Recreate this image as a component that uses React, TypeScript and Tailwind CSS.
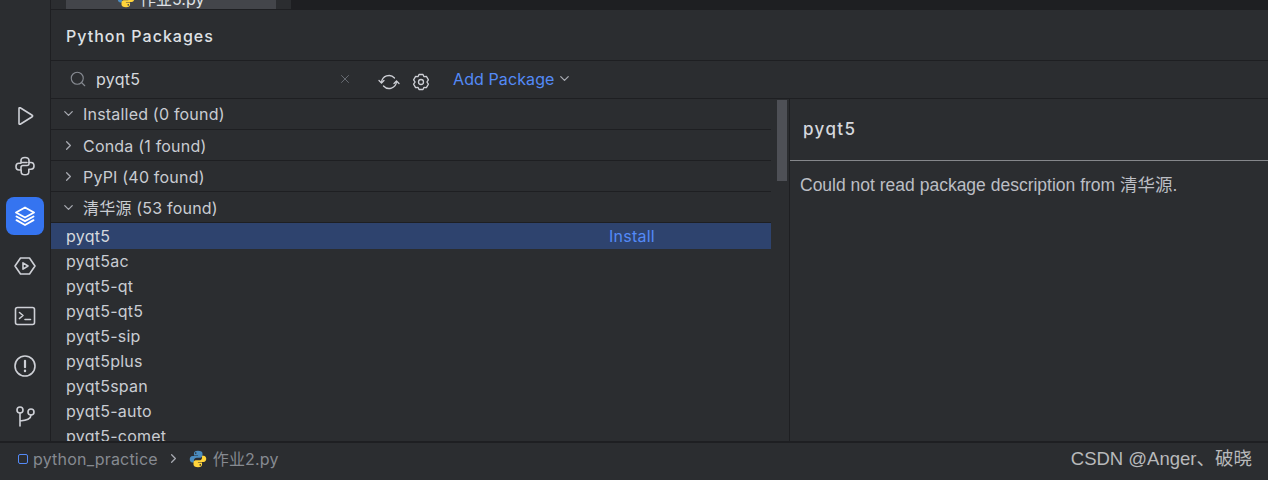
import { ChevronDown, ChevronRight, Search, X } from 'lucide-react';

const CJK = "font-['Inter','Noto_Sans_CJK_SC',sans-serif]";

const packages = ['pyqt5ac', 'pyqt5-qt', 'pyqt5-qt5', 'pyqt5-sip', 'pyqt5plus', 'pyqt5span', 'pyqt5-auto', 'pyqt5-comet'];

function PythonLogo({ size = 18 }: { size?: number }) {
  return (
    <svg width={size} height={size} viewBox="0 0 24 24" className="shrink-0">
      <path fill="#4b8bbe" d="M11.9 1C8 1 6.6 2.6 6.6 4.6V7.2h5.5V8H4.6C2.4 8 1 9.8 1 12.2s1.300 4.300 3.500 4.300h2.100v-2.700c0-2.100 1.800-3.600 3.800-3.600h4.600c1.700 0 3-1.400 3-3.100V4.600C18 2.500 16 1 11.900 1zM9 3a1.100 1.100 0 1 1 0 2.200A1.100 1.100 0 0 1 9 3z" />
      <path fill="#ffd43b" d="M12.100 23c3.900 0 5.300-1.600 5.300-3.600v-2.600h-5.500V16h7.500c2.200 0 3.600-1.800 3.600-4.200s-1.300-4.300-3.500-4.300h-2.100v2.700c0 2.100-1.800 3.600-3.800 3.600H9c-1.700 0-3 1.400-3 3.100v2.500C6 21.500 8 23 12.100 23zM15 21a1.100 1.100 0 1 1 0-2.200 1.100 1.100 0 0 1 0 2.200z" />
    </svg>
  );
}

function Rail({ children, active }: { children: React.ReactNode; active?: boolean }) {
  return (
    <div className={`w-[38px] h-[38px] rounded-[8px] flex items-center justify-center ${active ? 'bg-[#3574f0] text-white' : 'text-[#ced0d6]'}`}>
      {children}
    </div>
  );
}

const iconProps = { width: 24, height: 24, viewBox: '0 0 24 24', fill: 'none', stroke: 'currentColor', strokeWidth: 1.6, strokeLinejoin: 'round' as const, strokeLinecap: 'round' as const };

function GroupRow({ label, open, first }: { label: string; open?: boolean; first?: boolean }) {
  return (
    <div className={`h-[31px] shrink-0 flex items-center pl-[10px] border-b border-[#1e1f22] ${first ? 'pb-[1px]' : 'pt-[1px]'}`}>
      {open ? <ChevronDown size={15} className="text-[#a8abb2]" /> : <ChevronRight size={15} className="text-[#a8abb2]" />}
      <span className="ml-[7px] text-[16px] tracking-[0.2px] text-[#c9ccd2] whitespace-pre">{label}</span>
    </div>
  );
}

export default function App() {
  return (
    <div className={`w-[1268px] h-[480px] flex flex-col overflow-hidden bg-[#2b2d30] ${CJK}`}>
      <div className="flex-1 min-h-0 flex">
        {/* tool window rail */}
        <aside className="w-[51px] shrink-0 border-r border-[#1e1f22] flex flex-col items-center pt-[97px] gap-[12px] overflow-hidden">
          <Rail>
            <svg {...iconProps}><path d="M6 4.500v15a.8.8 0 0 0 1.200.7l12-7.500a.8.8 0 0 0 0-1.400l-12-7.500A.8.8 0 0 0 6 4.500z" /></svg>
          </Rail>
          <Rail>
            <svg {...iconProps}><path d="M9 8.500h5M12 3.500c-3 0-4 1-4 3v2.800H6c-2 0-3 1.300-3 3.200s1 3.500 3 3.500h2v-2.500c0-1.200 1-2 2-2h4c1.200 0 2-1 2-2V6.500c0-2-1-3-4-3z" /><path d="M16 8.500h2c2 0 3 1.500 3 3.500s-1 3.200-3 3.200h-2.200V18c0 2-1 2.800-3.800 2.800S8.200 20 8.200 18v-1.500" /></svg>
          </Rail>
          <Rail active>
            <svg {...iconProps} strokeWidth={1.9}><path d="M12 3.500 21 8.500l-9 5-9-5z" /><path d="M3.500 12.500 12 17.200l8.500-4.700" /><path d="M3.500 16.200 12 21l8.500-4.800" /></svg>
          </Rail>
          <Rail>
            <svg {...iconProps}><path d="M7.500 4h9L22 12l-5.500 8h-9L2 12z" /><path d="M10 8.800v6.400l5-3.200z" /></svg>
          </Rail>
          <Rail>
            <svg {...iconProps}><rect x="2.500" y="3.500" width="19" height="17" rx="2" /><path d="m6.500 8.500 3.500 3-3.500 3M12 15.500h5.500" /></svg>
          </Rail>
          <Rail>
            <svg {...iconProps}><circle cx="12" cy="12" r="10" /><path d="M12 6.800v6.400" strokeWidth={2.2} /><path d="M12 16.800v.2" strokeWidth={2.4} /></svg>
          </Rail>
          <Rail>
            <svg {...iconProps}><circle cx="7" cy="6" r="3" /><circle cx="18" cy="8" r="3" /><path d="M7 9v13M18 11c0 4-4 5.500-11 6" /></svg>
          </Rail>
        </aside>

        <main className="flex-1 min-w-0 flex flex-col">
          {/* clipped editor tree above the tool window */}
          <div className="h-[10px] shrink-0 flex bg-[#1e1f22] border-b border-[#1e1f22]">
            <div className="w-[240px] bg-[#2b2d30] pl-[15px]">
              <div className="h-[9px] w-[210px] bg-[#43454a] overflow-hidden flex items-end pl-[51px]">
                <div className="h-[18px] shrink-0 flex items-center gap-[5px] pb-[3px] text-[16px] text-[#dfe1e5] leading-[18px]">
                  <PythonLogo size={18} />
                  <span>作业5.py</span>
                </div>
              </div>
            </div>
          </div>

          {/* title */}
          <header className="h-[51px] shrink-0 flex items-center pl-[15px] pt-[1px] border-b border-[#1e1f22]">
            <h1 className="text-[16px] font-medium tracking-[1px] text-[#dfe1e5]">Python Packages</h1>
          </header>

          {/* toolbar */}
          <div className="h-[38px] shrink-0 flex items-center pb-[2px] border-b border-[#1e1f22]">
            <Search size={18} strokeWidth={1.5} className="ml-[18px] text-[#868a91]" />
            <span className="ml-[9px] w-[235px] text-[16px] tracking-[0.25px] text-[#d5d8dd]">pyqt5</span>
            <X size={14} strokeWidth={1.5} className="ml-[7px] text-[#6f737a]" />
            <svg width="22" height="22" viewBox="0 0 22 22" fill="none" stroke="#ced0d6" strokeWidth="1.300" strokeLinecap="round" strokeLinejoin="round" className="ml-[26px] mt-[7px]">
              <path d="M3.500 11.500a7.500 7.500 0 0 1 13-4.500" />
              <path d="M18.500 10.500a7.500 7.500 0 0 1-13 4.500" />
              <path d="M1 9.500l2.500 2.500 2.500-2.500M16 12.500l2.500-2.500 2.500 2.500" />
            </svg>
            <svg width="18" height="18" viewBox="0 0 18 18" fill="none" stroke="#ced0d6" strokeWidth="1.300" strokeLinejoin="round" className="ml-[12px] mt-[7px]">
              <path d="M7 1.500h4l1 2.200 2.400-.3 2 3.500L15 8.800v.4l1.400 1.900-2 3.500-2.400-.3-1 2.200H7l-1-2.200-2.400.3-2-3.500L3 9.200v-.4L1.600 6.900l2-3.500 2.400.3z" />
              <circle cx="9" cy="9" r="2.500" />
            </svg>
            <span className="ml-[23px] text-[16px] tracking-[0.1px] text-[#548af7]">Add Package</span>
            <ChevronDown size={15} className="ml-[3px] text-[#a8abb2]" />
          </div>

          <div className="flex-1 min-h-0 flex">
            {/* package list */}
            <div className="w-[720px] shrink-0 flex flex-col overflow-hidden">
              <GroupRow label="Installed (0 found)" open first />
              <GroupRow label="Conda (1 found)" />
              <GroupRow label="PyPI (40 found)" />
              <GroupRow label="清华源 (53 found)" open />
              <div className="h-[26px] shrink-0 flex items-center bg-[#2e436e] pl-[15px] text-[16px] tracking-[0.25px] text-[#d5d8dd]">
                <span className="w-[543px]">pyqt5</span>
                <span className="text-[#548af7]">Install</span>
              </div>
              {packages.map((name) => (
                <div key={name} className="h-[25px] shrink-0 flex items-center pl-[15px] pb-[2px] text-[16px] tracking-[0.25px] text-[#c9ccd2]">{name}</div>
              ))}
            </div>

            {/* scrollbar */}
            <div className="w-[19px] shrink-0 pl-[6px] pt-[1px] border-r border-[#1e1f22]">
              <div className="w-[10px] h-[81px] bg-[#4e5056]" />
            </div>

            {/* description */}
            <section className="flex-1 min-w-0 flex flex-col">
              <div className="h-[62px] shrink-0 flex items-center pl-[13px] border-b border-[#85878b]">
                <span className="text-[17px] font-medium tracking-[1.4px] text-[#d5d8dd]">pyqt5</span>
              </div>
              <p className="mt-[14px] pl-[10px] text-[17.5px] leading-[20px] text-[#bcbec4] font-['Liberation_Sans','Noto_Sans_CJK_SC',sans-serif]">Could not read package description from 清华源.</p>
            </section>
          </div>
        </main>
      </div>

      {/* status bar */}
      <footer className="h-[39px] shrink-0 border-t-2 border-[#1e1f22] flex items-center pl-[18px] pr-[16px] pb-[6px] text-[16px]">
        <div className="w-[10px] h-[10px] rounded-[2px] border-[1.5px] border-[#548af7]" />
        <span className="ml-[5px] tracking-[0.2px] text-[#868a91]">python_practice</span>
        <ChevronRight size={15} className="ml-[8px] text-[#a8abb2]" />
        <div className="ml-[8px]"><PythonLogo size={18} /></div>
        <span className="ml-[6px] tracking-[0.15px] text-[#868a91]">作业2.py</span>
        <span className="ml-auto text-[18.5px] text-[#b8b9bb] font-['Liberation_Sans','Noto_Sans_CJK_SC',sans-serif]">CSDN @Anger、破晓</span>
      </footer>
    </div>
  );
}
